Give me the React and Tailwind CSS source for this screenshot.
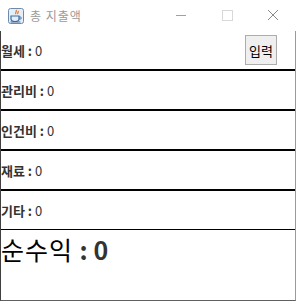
import React from "react";

const font = { fontFamily: '"Noto Sans CJK KR", "Noto Sans", sans-serif' };

function Row({ label, button }) {
  return (
    <div className="flex h-[38px] items-center justify-between">
      <span className="text-[13px] font-bold leading-none text-[#333]" style={font}>
        {label} : <span className="font-normal">0</span>
      </span>
      {button}
    </div>
  );
}

export default function App() {
  return (
    <div className="w-[296px] h-[301px] bg-white flex flex-col overflow-hidden" style={font}>
      <div className="h-[31px] flex items-center shrink-0 relative">
        <svg className="ml-[8px]" width="16" height="16" viewBox="0 0 16 16">
          <rect x="0.5" y="0.5" width="15" height="15" rx="2" fill="#e8eef5" stroke="#6a8bb0" />
          <path d="M8 2c1.5 1.5-1.5 2.5 0 4M10 3c1 1-1 2 0 3" stroke="#e07020" strokeWidth="1.2" fill="none" />
          <path d="M3 8h8v3c0 1.5-1.5 2.5-4 2.5S3 12.5 3 11z" fill="none" stroke="#3c6fa8" strokeWidth="1.2" />
          <path d="M11 9h1.5c1 0 1 2 0 2H11" fill="none" stroke="#3c6fa8" strokeWidth="1" />
          <path d="M2.5 14h10" stroke="#3c6fa8" strokeWidth="1" />
        </svg>
        <span className="ml-[6px] text-[12px] text-[#9a9a9a] tracking-[1px]">총 지출액</span>
        <div className="ml-auto flex items-center">
          <svg width="46" height="31" viewBox="0 0 46 31"><path d="M18 15.5h10" stroke="#a0a0a0" strokeWidth="1" /></svg>
          <svg width="46" height="31" viewBox="0 0 46 31"><rect x="18.5" y="10.5" width="10" height="10" fill="none" stroke="#d8d8d8" /></svg>
          <svg width="46" height="31" viewBox="0 0 46 31"><path d="M18 10l10 10M28 10l-10 10" stroke="#8a8a8a" strokeWidth="1" /></svg>
        </div>
      </div>
      <div className="flex-1 flex flex-col border-l border-r border-b border-l-[#404040] border-r-[#9a9a9a] border-b-[#606060]">
        <Row
          label="월세"
          button={
            <button className="mr-[18px] h-[30px] w-[32px] border border-[#adadad] bg-[#efefef] text-[13px] text-black leading-none">
              입력
            </button>
          }
        />
        <div className="h-[2px] bg-black" />
        <Row label="관리비" />
        <div className="h-[2px] bg-black" />
        <Row label="인건비" />
        <div className="h-[2px] bg-black" />
        <Row label="재료" />
        <div className="h-[2px] bg-black" />
        <Row label="기타" />
        <div className="h-[1px] bg-black" />
        <div className="flex-1 pt-[4px]">
          <span className="text-[25px] leading-[30px] text-black tracking-[1px]">순수익 </span>
          <span className="text-[25px] leading-[30px] font-bold text-[#333]">: 0</span>
        </div>
      </div>
    </div>
  );
}
